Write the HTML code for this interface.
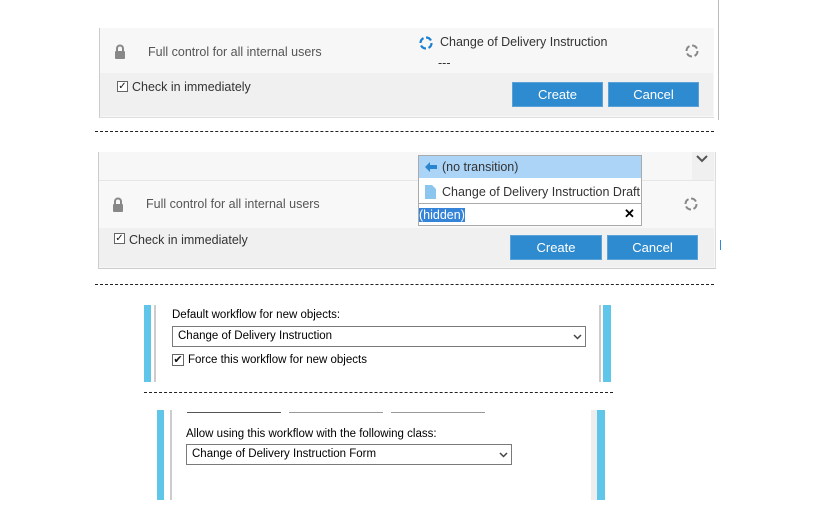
<!DOCTYPE html>
<html><head><style>
body{margin:0;width:813px;height:521px;background:#fff;position:relative;overflow:hidden;font-family:"Liberation Sans",sans-serif;}
.a{position:absolute}
.t{position:absolute;font-size:12.5px;color:#333;white-space:nowrap;line-height:14px}
.btn{position:absolute;background:#2f8bcf;color:#fff;font-size:13px;text-align:center;border:1px solid #5aa2d8;box-sizing:border-box;line-height:24px}
.dash{position:absolute;height:0;border-top:1px dashed #222}
.cb{position:absolute;width:11px;height:11px;border:1px solid #666;background:#fff;box-sizing:border-box;font-size:10px;line-height:9px;text-align:center;color:#111}
.w{font-size:11.5px;color:#000}
</style></head><body>
<!-- Panel 1 -->
<div class="a" style="left:99px;top:28px;width:614px;height:89px;background:#f7f7f7;border-left:1px solid #ccc;border-bottom:1px solid #ddd"></div>
<div class="a" style="left:100px;top:73px;width:613px;height:43px;background:#f0f0f0"></div>
<div class="a" style="left:718px;top:0;width:1px;height:120px;background:#bbb"></div>
<svg class="a" style="left:114px;top:44px" width="12" height="15" viewBox="0 0 12 15"><path d="M3 7V4.5a3 3 0 0 1 6 0V7" fill="none" stroke="#888" stroke-width="2"/><rect x="1" y="7" width="10" height="8" rx="1" fill="#888"/></svg>
<div class="t" style="left:148px;top:45px;color:#555">Full control for all internal users</div>
<svg class="a" style="left:418px;top:35px" width="16" height="16" viewBox="0 0 16 16"><circle cx="8" cy="8" r="5.5" fill="none" stroke="#1d7fd0" stroke-width="2.2" stroke-dasharray="6 2.6"/></svg>
<div class="t" style="left:440px;top:35px">Change of Delivery Instruction</div>
<div class="t" style="left:438px;top:56px">---</div>
<svg class="a" style="left:684px;top:43px" width="16" height="16" viewBox="0 0 16 16"><circle cx="8" cy="8" r="5.5" fill="none" stroke="#888" stroke-width="2" stroke-dasharray="6 2.6"/></svg>
<div class="cb" style="left:117px;top:81px">✓</div>
<div class="t" style="left:132px;top:80px">Check in immediately</div>
<div class="btn" style="left:512px;top:82px;width:91px;height:25px">Create</div>
<div class="btn" style="left:608px;top:82px;width:91px;height:25px">Cancel</div>
<div class="dash" style="left:95px;top:131px;width:619px"></div>

<!-- Panel 2 -->
<div class="a" style="left:98px;top:152px;width:616px;height:116px;background:#f7f7f7;border-left:1px solid #ccc;border-bottom:1px solid #ccc;border-right:1px solid #ddd"></div>
<div class="a" style="left:99px;top:180px;width:615px;height:1px;background:#e6e6e6"></div>
<div class="a" style="left:99px;top:181px;width:615px;height:47px;background:#f8f8f8"></div>
<div class="a" style="left:99px;top:228px;width:615px;height:39px;background:#f0f0f0"></div>
<div class="a" style="left:692px;top:152px;width:22px;height:28px;background:#f0f0f0"></div>
<svg class="a" style="left:696px;top:155px" width="12" height="8" viewBox="0 0 12 8"><path d="M1 1L6 6L11 1" fill="none" stroke="#555" stroke-width="2"/></svg>
<div class="a" style="left:720px;top:240px;width:1px;height:10px;background:#2f8bcf"></div>
<div class="a" style="left:418px;top:155px;width:224px;height:71px;background:#fff;border:1px solid #aaa;box-sizing:border-box"></div>
<div class="a" style="left:419px;top:156px;width:222px;height:22px;background:#acd4f7"></div>
<svg class="a" style="left:425px;top:162px" width="12" height="10" viewBox="0 0 12 10"><path d="M0 5L5 0V3H12V7H5V10Z" fill="#2a85d0"/></svg>
<div class="t" style="left:442px;top:160px">(no transition)</div>
<svg class="a" style="left:425px;top:185px" width="11" height="14" viewBox="0 0 11 14"><path d="M0 0H7L11 4V14H0Z" fill="#8cc6ee"/></svg>
<div class="t" style="left:442px;top:185px">Change of Delivery Instruction Draft</div>
<div class="a" style="left:418px;top:203px;width:224px;height:1px;background:#aaa"></div>
<div class="t" style="left:419px;top:208px;background:#3584d8;color:#fff">(hidden)</div>
<div class="t" style="left:624px;top:207px;font-size:13px;color:#000;font-weight:bold">✕</div>
<svg class="a" style="left:112px;top:197px" width="12" height="15" viewBox="0 0 12 15"><path d="M3 7V4.5a3 3 0 0 1 6 0V7" fill="none" stroke="#888" stroke-width="2"/><rect x="1" y="7" width="10" height="8" rx="1" fill="#888"/></svg>
<div class="t" style="left:146px;top:197px;color:#555">Full control for all internal users</div>
<svg class="a" style="left:683px;top:196px" width="16" height="16" viewBox="0 0 16 16"><circle cx="8" cy="8" r="5.5" fill="none" stroke="#888" stroke-width="2" stroke-dasharray="6 2.6"/></svg>
<div class="cb" style="left:114px;top:233px">✓</div>
<div class="t" style="left:129px;top:233px">Check in immediately</div>
<div class="btn" style="left:510px;top:235px;width:92px;height:25px">Create</div>
<div class="btn" style="left:607px;top:235px;width:91px;height:25px">Cancel</div>
<div class="dash" style="left:95px;top:284px;width:619px"></div>

<!-- Panel 3 -->
<div class="a" style="left:144px;top:305px;width:7px;height:77px;background:#5fc6ea"></div>
<div class="a" style="left:154px;top:305px;width:2px;height:77px;background:#ccc"></div>
<div class="a" style="left:599px;top:305px;width:2px;height:77px;background:#ccc"></div>
<div class="a" style="left:603px;top:305px;width:8px;height:77px;background:#5fc6ea"></div>
<div class="t w" style="left:172px;top:308px">Default workflow for new objects:</div>
<div class="a" style="left:172px;top:326px;width:414px;height:21px;border:1px solid #7a7a7a;box-sizing:border-box;background:#fff"></div>
<div class="t w" style="left:178px;top:329px">Change of Delivery Instruction</div>
<svg class="a" style="left:573px;top:334px" width="9" height="6" viewBox="0 0 9 6"><path d="M1 1L4.5 4.5L8 1" fill="none" stroke="#444" stroke-width="1.5"/></svg>
<div class="cb" style="left:172px;top:354px;width:12px;height:12px;font-size:11px;line-height:10px">✔</div>
<div class="t w" style="left:188px;top:353px">Force this workflow for new objects</div>
<div class="dash" style="left:144px;top:392px;width:469px"></div>

<!-- Panel 4 -->
<div class="a" style="left:157px;top:410px;width:7px;height:90px;background:#5fc6ea"></div>
<div class="a" style="left:170px;top:410px;width:2px;height:90px;background:#ccc"></div>
<div class="a" style="left:187px;top:412px;width:94px;height:1px;background:#555"></div>
<div class="a" style="left:289px;top:412px;width:94px;height:1px;background:#999"></div>
<div class="a" style="left:391px;top:412px;width:94px;height:1px;background:#999"></div>
<div class="a" style="left:591px;top:410px;width:6px;height:90px;background:#eee"></div>
<div class="a" style="left:597px;top:410px;width:8px;height:90px;background:#5fc6ea"></div>
<div class="t w" style="left:186px;top:427px">Allow using this workflow with the following class:</div>
<div class="a" style="left:186px;top:444px;width:326px;height:21px;border:1px solid #7a7a7a;box-sizing:border-box;background:#fff"></div>
<div class="t w" style="left:192px;top:447px">Change of Delivery Instruction Form</div>
<svg class="a" style="left:499px;top:452px" width="9" height="6" viewBox="0 0 9 6"><path d="M1 1L4.5 4.5L8 1" fill="none" stroke="#444" stroke-width="1.5"/></svg>
</body></html>
